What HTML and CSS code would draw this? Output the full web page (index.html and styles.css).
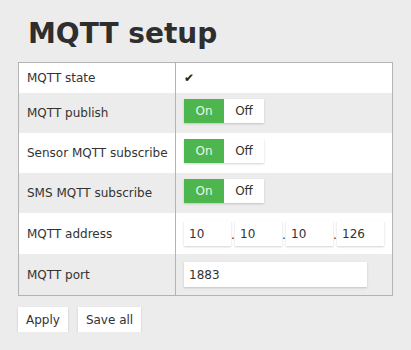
FILE: index.html
```html
<!DOCTYPE html>
<html>
<head>
<meta charset="utf-8">
<link rel="stylesheet" href="styles.css">
</head>
<body>
<h1 class="title">MQTT setup</h1>
<div class="settings">
  <div class="row row-first">
    <div class="label">MQTT state</div>
    <div class="value"><span class="check">✔</span></div>
  </div>
  <div class="row row-alt">
    <div class="label">MQTT publish</div>
    <div class="value value-toggle">
      <div class="toggle"><span class="opt opt-on">On</span><span class="opt">Off</span></div>
    </div>
  </div>
  <div class="row">
    <div class="label">Sensor MQTT subscribe</div>
    <div class="value value-toggle">
      <div class="toggle"><span class="opt opt-on">On</span><span class="opt">Off</span></div>
    </div>
  </div>
  <div class="row row-alt">
    <div class="label">SMS MQTT subscribe</div>
    <div class="value value-toggle">
      <div class="toggle"><span class="opt opt-on">On</span><span class="opt">Off</span></div>
    </div>
  </div>
  <div class="row">
    <div class="label">MQTT address</div>
    <div class="value value-input">
      <div class="ip">
        <input class="field field-octet" value="10"><span class="dot">.</span><input class="field field-octet" value="10"><span class="dot">.</span><input class="field field-octet" value="10"><span class="dot">.</span><input class="field field-octet" value="126">
      </div>
    </div>
  </div>
  <div class="row row-alt">
    <div class="label">MQTT port</div>
    <div class="value value-input">
      <input class="field field-port" value="1883">
    </div>
  </div>
</div>
<div class="actions">
  <button class="btn">Apply</button>
  <button class="btn">Save all</button>
</div>
</body>
</html>
```

FILE: styles.css
```css
html, body {
  margin: 0;
  padding: 0;
  background: #ececec;
}

body {
  padding: 0 18px;
  font-family: "DejaVu Sans", Verdana, sans-serif;
  font-size: 12px;
  color: #333;
}

.title {
  margin: 18px 0 12px 10px;
  font-size: 28px;
  line-height: 32px;
  font-weight: bold;
  color: #2e2e2e;
}

.settings {
  width: 375px;
  box-sizing: border-box;
  border: 1px solid #b4b4b4;
}

.row {
  display: grid;
  grid-template-columns: 157px 1fr;
  background: #fff;
}

.row-alt {
  background: #ececec;
}

.label {
  border-right: 1px solid #b4b4b4;
  padding: 0 8px;
  display: flex;
  align-items: center;
  line-height: 14px;
  white-space: nowrap;
}

.value {
  padding: 0 8px;
  display: flex;
  align-items: center;
  line-height: 14px;
}

.row-first {
  height: 30px;
}

.value-toggle {
  height: 40px;
  box-sizing: border-box;
  padding-top: 6px;
  padding-bottom: 10px;
}

.value-input {
  height: 41px;
  box-sizing: border-box;
  padding-top: 8px;
  padding-bottom: 8px;
}

.check {
  font-size: 12px;
  color: #222;
}

.toggle {
  display: flex;
  height: 24px;
  box-shadow: 0 1px 2px rgba(0, 0, 0, 0.18);
}

.opt {
  width: 40px;
  display: flex;
  align-items: center;
  justify-content: center;
  background: #fff;
  color: #333;
}

.opt-on {
  background: #4db64e;
  color: #e9f7e9;
}

.ip {
  display: flex;
  align-items: flex-end;
}

.dot {
  width: 4px;
  line-height: 14px;
  padding-bottom: 4px;
  color: #333;
}

.field {
  font-family: "DejaVu Sans", Verdana, sans-serif;
  font-size: 12px;
  color: #333;
  height: 25px;
  box-sizing: border-box;
  border: none;
  padding: 0 5px;
  background: #fff;
  box-shadow: 0 1px 2px rgba(0, 0, 0, 0.18);
  outline: none;
}

.field-octet {
  width: 47px;
}

.field-port {
  width: 183px;
}

.actions {
  display: flex;
  gap: 10px;
  margin-top: 11px;
}

.btn {
  font-family: "DejaVu Sans", Verdana, sans-serif;
  font-size: 12px;
  color: #333;
  height: 25px;
  padding: 0 8px;
  border: none;
  background: #fff;
  box-shadow: 0 1px 2px rgba(0, 0, 0, 0.18);
}
```
